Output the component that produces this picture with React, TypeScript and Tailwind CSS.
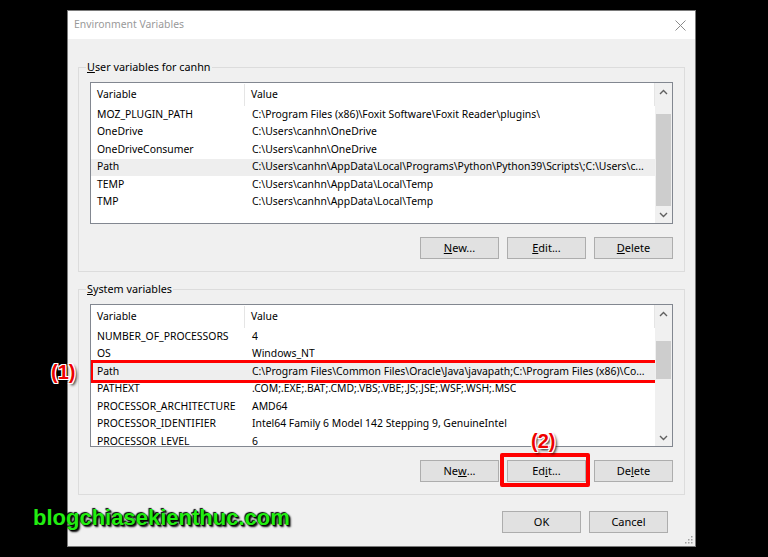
import React from "react";

type Row = { name: string; value: string; selected?: boolean; marked?: boolean };

const userRows: Row[] = [
  { name: "MOZ_PLUGIN_PATH", value: "C:\\Program Files (x86)\\Foxit Software\\Foxit Reader\\plugins\\" },
  { name: "OneDrive", value: "C:\\Users\\canhn\\OneDrive" },
  { name: "OneDriveConsumer", value: "C:\\Users\\canhn\\OneDrive" },
  {
    name: "Path",
    value: "C:\\Users\\canhn\\AppData\\Local\\Programs\\Python\\Python39\\Scripts\\;C:\\Users\\c...",
    selected: true,
  },
  { name: "TEMP", value: "C:\\Users\\canhn\\AppData\\Local\\Temp" },
  { name: "TMP", value: "C:\\Users\\canhn\\AppData\\Local\\Temp" },
];

const systemRows: Row[] = [
  { name: "NUMBER_OF_PROCESSORS", value: "4" },
  { name: "OS", value: "Windows_NT" },
  {
    name: "Path",
    value: "C:\\Program Files\\Common Files\\Oracle\\Java\\javapath;C:\\Program Files (x86)\\Co...",
    selected: true,
    marked: true,
  },
  { name: "PATHEXT", value: ".COM;.EXE;.BAT;.CMD;.VBS;.VBE;.JS;.JSE;.WSF;.WSH;.MSC" },
  { name: "PROCESSOR_ARCHITECTURE", value: "AMD64" },
  { name: "PROCESSOR_IDENTIFIER", value: "Intel64 Family 6 Model 142 Stepping 9, GenuineIntel" },
  { name: "PROCESSOR_LEVEL", value: "6" },
];

const Chevron = ({ up }: { up?: boolean }) => (
  <svg width="9" height="6" viewBox="0 0 9 6">
    <path
      d={up ? "M1 5 L4.5 1.5 L8 5" : "M1 1 L4.5 4.5 L8 1"}
      fill="none"
      stroke="#606060"
      strokeWidth="1.4"
    />
  </svg>
);

const ListBox = ({
  rows,
  height,
  thumbTop,
  thumbHeight,
}: {
  rows: Row[];
  height: string;
  thumbTop: string;
  thumbHeight: string;
}) => (
  <div className={`flex border border-[#828790] bg-white ${height}`}>
    <div className="min-w-0 flex-1 overflow-hidden">
      <div className="flex h-[23px] items-center border-r border-[#e5e5e5] pt-[1px]">
        <div className="flex h-full w-[154px] shrink-0 items-center border-r border-[#e5e5e5] pl-[6px]">
          Variable
        </div>
        <div className="pl-[6px]">Value</div>
      </div>
      {rows.map((r) => (
        <div
          key={r.name}
          className={`relative flex h-[17.5px] items-center whitespace-nowrap ${r.selected ? "bg-[#eeeeee]" : ""}`}
        >
          <div className="w-[154px] shrink-0 pl-[6px]">{r.name}</div>
          <div className="min-w-0 overflow-hidden pl-[7px]">{r.value}</div>
          {r.marked && (
            <span className="absolute -top-[3px] -bottom-[2px] -left-[1px] -right-[3px] z-10 border-[3px] border-[#ff0000]" />
          )}
        </div>
      ))}
    </div>
    <div className="flex w-[17px] shrink-0 flex-col bg-[#f0f0f0]">
      <div className="flex h-[17px] items-center justify-center">
        <Chevron up />
      </div>
      <div className="flex-1">
        <div className={`mx-auto w-[15px] bg-[#cdcdcd] ${thumbTop} ${thumbHeight}`} />
      </div>
      <div className="flex h-[17px] items-center justify-center">
        <Chevron />
      </div>
    </div>
  </div>
);

const Btn = ({ children, boxed }: { children: React.ReactNode; boxed?: boolean }) => (
  <div className="relative">
    <button className="flex h-[22px] w-[79px] items-center justify-center border border-[#adadad] bg-[#e1e1e1] text-[11px] text-black">
      {children}
    </button>
    {boxed && (
      <span className="absolute -top-[7px] -bottom-[5px] -left-[7px] -right-[4px] rounded-[2px] border-[4px] border-[#ff0000]" />
    )}
  </div>
);

const GroupBox = ({ label, children }: { label: React.ReactNode; children: React.ReactNode }) => (
  <div className="relative border border-[#dcdcdc] px-[11px] pt-[14px] pb-[12px]">
    <div className="absolute -top-[9px] left-[7px] bg-[#f0f0f0] px-[1px] text-[10.8px] leading-[16px]">{label}</div>
    {children}
  </div>
);

export default function App() {
  return (
    <div className="relative h-[557px] w-[768px] overflow-hidden bg-black pl-[67px] pt-[10px] font-['Noto_Sans',sans-serif] text-[10.4px] text-black">
      <div className="relative flex h-[537px] w-[629px] flex-col border border-[#7a7a7a] bg-[#f0f0f0]">
        <div className="flex h-[28px] items-center justify-between bg-white pl-[6px] pr-[9px]">
          <span className="text-[#999999]">Environment Variables</span>
          <svg width="11" height="11" viewBox="0 0 11 11">
            <path d="M0.5 0.5 L10.5 10.5 M10.5 0.5 L0.5 10.5" stroke="#8a8a8a" strokeWidth="1" />
          </svg>
        </div>

        <div className="flex flex-col px-[10px] pt-[28px]">
          <GroupBox
            label={
              <>
                <u>U</u>ser variables for canhn
              </>
            }
          >
            <ListBox rows={userRows} height="h-[142px]" thumbTop="mt-[14px]" thumbHeight="h-[92px]" />
            <div className="mt-[13px] flex justify-end gap-[8px]">
              <Btn>
                <u>N</u>ew...
              </Btn>
              <Btn>
                <u>E</u>dit...
              </Btn>
              <Btn>
                <u>D</u>elete
              </Btn>
            </div>
          </GroupBox>

          <div className="mt-[17px]">
            <GroupBox
              label={
                <>
                  <u>S</u>ystem variables
                </>
              }
            >
              <ListBox rows={systemRows} height="h-[143px]" thumbTop="mt-[19px]" thumbHeight="h-[38px]" />
              <div className="mt-[13px] flex justify-end gap-[8px]">
                <Btn>
                  Ne<u>w</u>...
                </Btn>
                <Btn boxed>
                  Ed<u>i</u>t...
                </Btn>
                <Btn>
                  De<u>l</u>ete
                </Btn>
              </div>
            </GroupBox>
          </div>

          <div className="mt-[16px] flex justify-end gap-[8px] pr-[17px]">
            <Btn>OK</Btn>
            <Btn>Cancel</Btn>
          </div>
        </div>

        <svg className="absolute right-[2px] bottom-[2px]" width="9" height="9" viewBox="0 0 9 9">
          {[
            [7, 1],
            [7, 4],
            [4, 4],
            [7, 7],
            [4, 7],
            [1, 7],
          ].map(([x, y]) => (
            <rect key={`${x}-${y}`} x={x} y={y} width="1.5" height="1.5" fill="#a0a0a0" />
          ))}
        </svg>
      </div>

      <span className="absolute left-[51px] top-[357px] font-['Liberation_Sans',Arial,sans-serif] text-[20px] font-bold text-[#ee0000] [text-shadow:-1px_-1px_0_#fff,1px_-1px_0_#fff,-1px_1px_0_#fff,1px_1px_0_#fff,0_1px_0_#fff,1px_0_0_#fff,2px_2px_3px_#000]">
        (1)
      </span>
      <span className="absolute left-[531px] top-[426px] font-['Liberation_Sans',Arial,sans-serif] text-[20px] font-bold text-[#ee0000] [text-shadow:-1px_-1px_0_#fff,1px_-1px_0_#fff,-1px_1px_0_#fff,1px_1px_0_#fff,0_1px_0_#fff,1px_0_0_#fff,2px_2px_3px_#000]">
        (2)
      </span>
      <span className="absolute left-[33px] top-[501px] font-['Liberation_Sans',Arial,sans-serif] text-[22px] font-bold text-[#22ee11] [text-shadow:2px_2px_2px_#000,1px_1px_1px_#000,-1px_-1px_1px_#000]">
        blogchiasekienthuc.com
      </span>
    </div>
  );
}
